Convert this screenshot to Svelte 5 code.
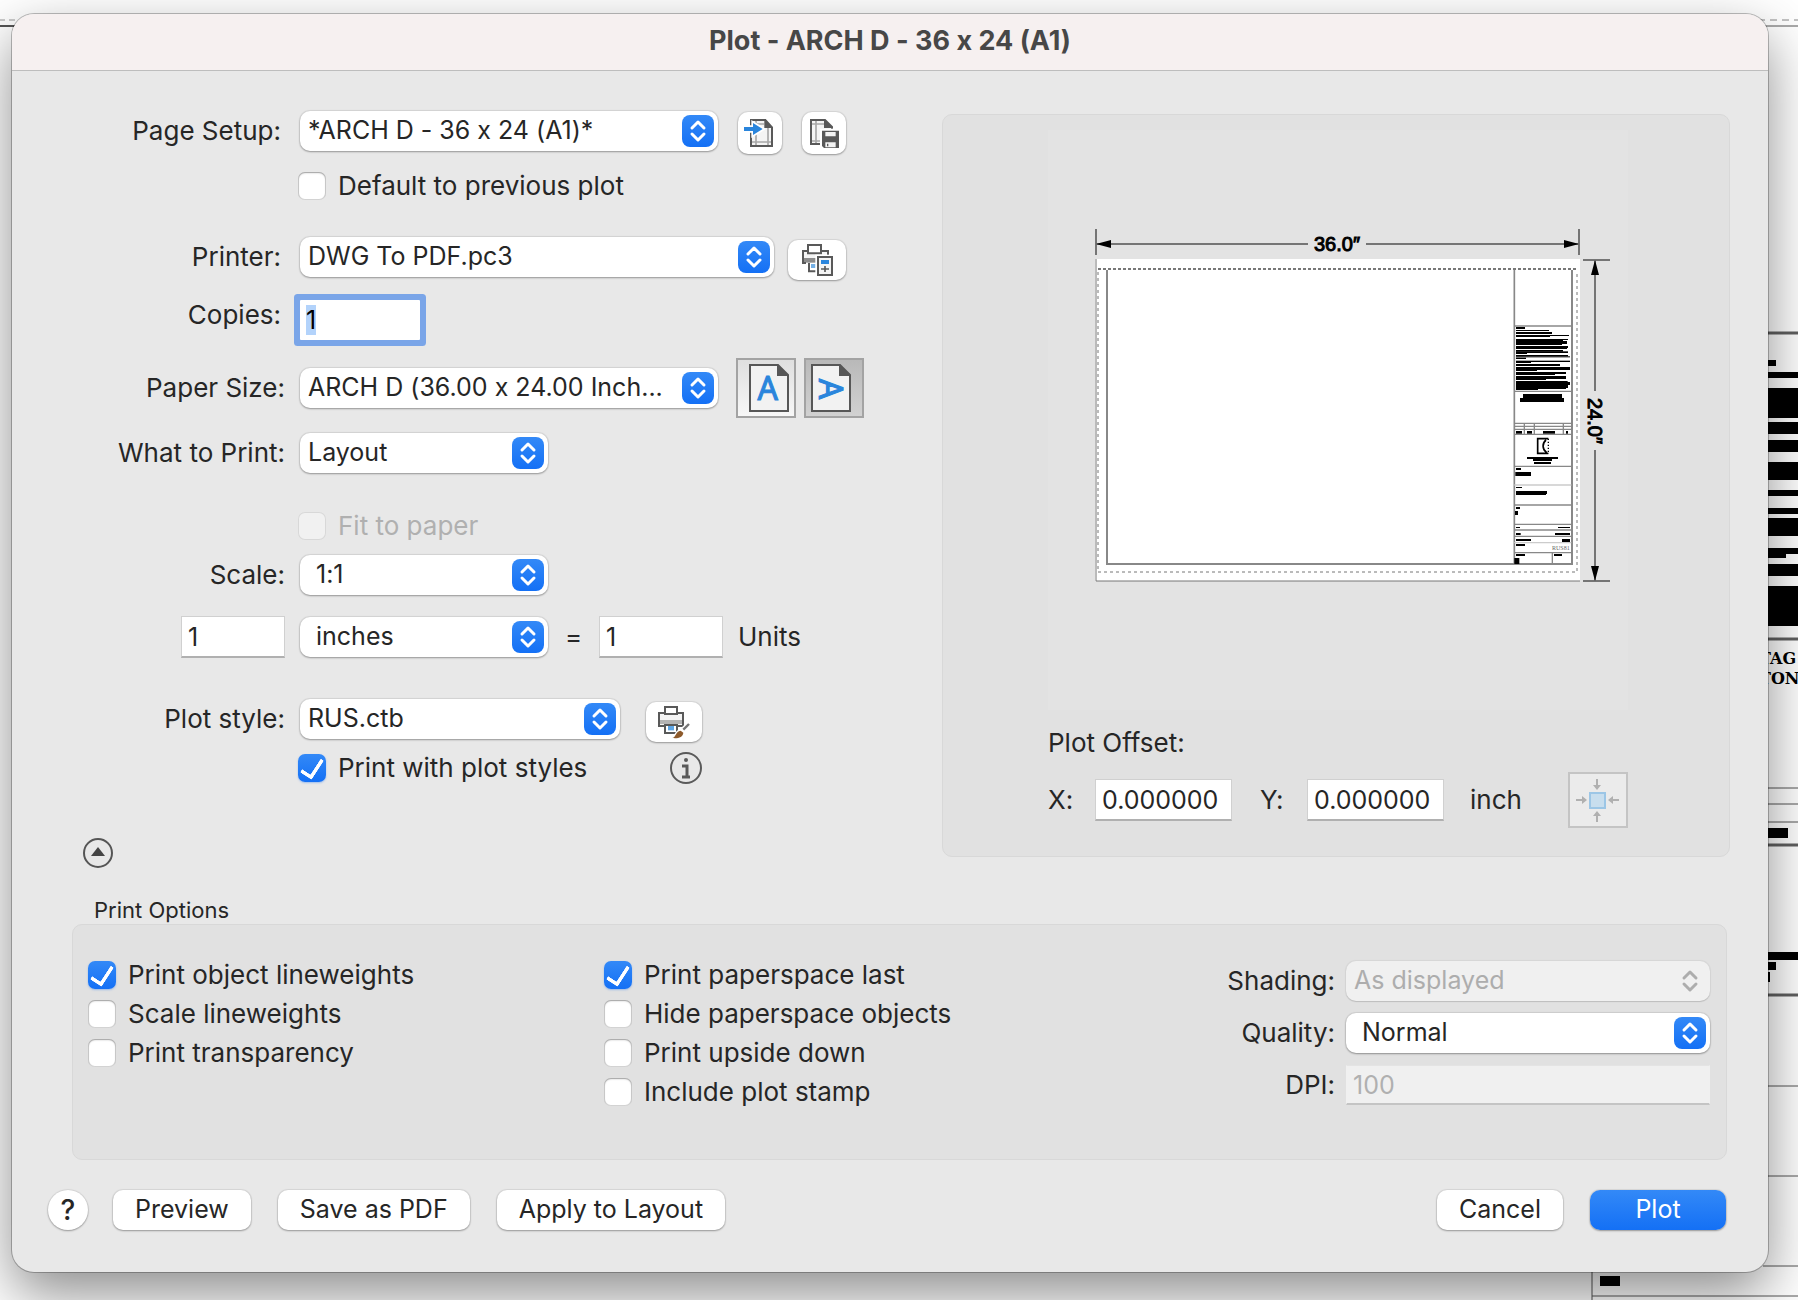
<script lang="ts">
  import { onMount } from 'svelte'

  interface CheckOption {
    id: string
    label: string
    checked: boolean
  }

  let copiesInput: HTMLInputElement
  let copies = $state('1')
  let paperUnits = $state('1')
  let drawingUnits = $state('1')
  let offsetX = $state('0.000000')
  let offsetY = $state('0.000000')
  let defaultToPrevious = $state(false)
  let plotStyles = $state(true)
  let landscape = $state(true)

  let objectOptions: CheckOption[] = $state([
    { id: 'lineweights', label: 'Print object lineweights', checked: true },
    { id: 'scale-lineweights', label: 'Scale lineweights', checked: false },
    { id: 'transparency', label: 'Print transparency', checked: false }
  ])

  let paperOptions: CheckOption[] = $state([
    { id: 'paperspace-last', label: 'Print paperspace last', checked: true },
    { id: 'hide-objects', label: 'Hide paperspace objects', checked: false },
    { id: 'upside-down', label: 'Print upside down', checked: false },
    { id: 'plot-stamp', label: 'Include plot stamp', checked: false }
  ])

  // x, y, width, height of the filled bars in the title block
  const blockBars = [
    [48, 201, 27, 6], [48, 210, 99, 3], [48, 216, 108, 6], [48, 225, 159, 3],
    [48, 228, 102, 3], [48, 237, 156, 3], [48, 240, 141, 3], [48, 243, 153, 9],
    [48, 252, 138, 3], [48, 258, 156, 6], [48, 264, 153, 3], [48, 270, 141, 5],
    [48, 274, 156, 5], [48, 279, 33, 3], [48, 285, 156, 4], [48, 289, 162, 3],
    [48, 293, 30, 4], [48, 302, 162, 4], [48, 305, 45, 4], [48, 312, 132, 6],
    [48, 321, 162, 9], [48, 329, 63, 4], [48, 336, 150, 6], [48, 342, 117, 3],
    [48, 348, 150, 9], [48, 357, 90, 3], [48, 363, 155, 3], [48, 366, 162, 9],
    [48, 375, 156, 9], [48, 383, 150, 4], [48, 387, 66, 3],
    [69, 402, 117, 12], [60, 414, 132, 12],
    [48, 513, 18, 8], [81, 513, 15, 8], [129, 513, 36, 8], [198, 513, 6, 8],
    [81, 591, 93, 6], [99, 597, 57, 6], [102, 606, 51, 6],
    [48, 624, 15, 6], [46, 636, 47, 12], [48, 681, 18, 3], [48, 693, 93, 9],
    [48, 702, 90, 3], [48, 741, 12, 6], [45, 753, 9, 12], [48, 801, 12, 3],
    [174, 801, 36, 3], [48, 819, 14, 6], [165, 819, 45, 6], [48, 837, 45, 6],
    [186, 837, 24, 9], [48, 852, 27, 6], [48, 882, 27, 6], [162, 882, 24, 6],
    [43, 894, 15, 18]
  ]
  const blockLines = [198, 394, 490, 499, 508, 523, 619, 735, 793, 810, 829, 878]

  // the drawing behind the window: y, height, width
  const sheetBars = [
    [360, 6, 8], [372, 6, 30], [388, 30, 30], [422, 12, 30], [440, 12, 30],
    [462, 18, 30], [490, 6, 30], [508, 6, 30], [518, 18, 30], [548, 6, 30],
    [554, 4, 18], [564, 12, 30], [586, 40, 30], [828, 10, 20], [952, 8, 30],
    [962, 8, 8], [972, 10, 2]
  ]
  const thickLines = [333, 639, 845, 995]
  const thinLines = [26, 788, 804, 822, 1086, 1176, 1266]

  onMount(() => {
    copiesInput.focus()
    copiesInput.select()
  })
</script>

{#snippet popup(id: string, value: string, size: string, indent = false, disabled = false)}
  <div class="popup {size}" class:disabled>
    <select {id} class:indent {disabled}>
      <option>{value}</option>
    </select>
    <svg class="chevrons" viewBox="0 0 32 32" aria-hidden="true">
      <path d="M10 13 L16 7 L22 13 M10 19 L16 25 L22 19" />
    </svg>
  </div>
{/snippet}

{#snippet checks(options: CheckOption[])}
  {#each options as option (option.id)}
    <label class="check">
      <input type="checkbox" bind:checked={option.checked} />
      {option.label}
    </label>
  {/each}
{/snippet}

<div class="desktop">
  <svg class="sheet left" viewBox="0 0 20 40" aria-hidden="true">
    <path d="M0 20 H5 M9 20 H15" stroke="#999" />
    <path d="M0 26 H20" stroke="#555" stroke-width="2" />
  </svg>
  <svg class="sheet right" viewBox="0 0 220 1300" aria-hidden="true">
    <path d="M180 20 H220" stroke="#888" stroke-dasharray="7 5" />
    {#each thinLines as y}
      <path d="M185 {y} H220" stroke="#555" />
    {/each}
    {#each thickLines as y}
      <path d="M190 {y} H220" stroke="#606060" stroke-width="3" />
    {/each}
    {#each sheetBars as [y, height, width]}
      <rect x="190" {y} {width} {height} />
    {/each}
    <text x="181" y="664">TAG</text>
    <text x="181" y="684">TON</text>
    <path d="M14 1260 V1300 M14 1296 H220" stroke="#555" fill="none" />
    <rect x="22" y="1276" width="20" height="10" />
  </svg>

  <div class="dialog" role="dialog" aria-labelledby="title">
    <header>
      <h1 id="title">Plot - ARCH D - 36 x 24 (A1)</h1>
    </header>

    <div class="main">
      <div class="form">
        <div class="group">
          <div class="row tall">
            <label class="name" for="page-setup">Page Setup:</label>
            {@render popup('page-setup', '*ARCH D - 36 x 24 (A1)*', 'large')}
            <div class="tools">
              <button class="icon-button square" aria-label="Import page setup">
                <svg viewBox="0 0 132 126">
                  <path d="M39 24 H82 L102 46 V102 H39 Z" fill="#f4f4f4" stroke="#595959" stroke-width="6" />
                  <path d="M54 27 V99 M90 48 V99 M42 90 H99 M42 36 H78" stroke="#a8a8a8" stroke-width="5" />
                  <path d="M79 21 L105 48 H79 Z" fill="#595959" />
                  <path d="M18 45 H45 V33 L74 51 L45 69 V57 H18 Z" fill="#2a85dc" stroke="#fff" stroke-width="10" paint-order="stroke" />
                </svg>
              </button>
              <button class="icon-button square" aria-label="Save page setup">
                <svg viewBox="0 0 132 126">
                  <path d="M27 24 H69 L90 45 V96 H27 Z" fill="#f4f4f4" stroke="#595959" stroke-width="6" />
                  <path d="M42 27 V93 M30 36 H66 M30 87 H66" stroke="#a8a8a8" stroke-width="5" />
                  <path d="M66 21 L93 48 H66 Z" fill="#595959" />
                  <rect x="54" y="50" width="63" height="64" fill="#fff" />
                  <path d="M60 56 H111 V108 H66 L60 102 Z" fill="#595959" />
                  <path d="M70 60 H101 V73 H70 Z M70 91 H101 V106 H70 Z" fill="#f4f4f4" />
                  <path d="M77 95 V103" stroke="#595959" stroke-width="4" />
                </svg>
              </button>
            </div>
          </div>

          <div class="row checkrow">
            <span class="name"></span>
            <label class="check">
              <input type="checkbox" bind:checked={defaultToPrevious} />
              Default to previous plot
            </label>
          </div>

          <div class="row tall printer">
            <label class="name" for="printer">Printer:</label>
            {@render popup('printer', 'DWG To PDF.pc3', 'xlarge')}
            <button class="icon-button" aria-label="Printer info">
              <svg viewBox="0 0 174 120">
                <path d="M42 33 H120 V66 H42 Z" fill="#f4f4f4" />
                <path d="M42 54 H100 V68 H42 Z" fill="#8c8c8c" />
                <path d="M54 69 H45 V33 H120 V54" fill="none" stroke="#595959" stroke-width="6" />
                <path d="M60 15 H99 V40 H60 Z" fill="#fff" stroke="#595959" stroke-width="6" />
                <path d="M84 94 H63 V69" fill="#fff" stroke="#595959" stroke-width="6" />
                <rect x="69" y="72" width="14" height="12" fill="#74b0e6" />
                <rect x="82" y="44" width="58" height="70" fill="#fff" />
                <rect x="90" y="51" width="42" height="54" fill="#f4f4f4" stroke="#595959" stroke-width="6" />
                <rect x="99" y="60" width="24" height="12" fill="#2a85dc" />
                <path d="M99 87 H123 M111 78 V96" stroke="#595959" stroke-width="5" />
              </svg>
            </button>
          </div>

          <div class="row copies">
            <label class="name" for="copies">Copies:</label>
            <input id="copies" class="field focused" type="text" bind:this={copiesInput} bind:value={copies} />
          </div>
        </div>

        <div class="group lower">
          <div class="row paper">
            <label class="name" for="paper-size">Paper Size:</label>
            {@render popup('paper-size', 'ARCH D (36.00 x 24.00 Inch...', 'large')}
            <div class="orientation">
              <button class="orient" class:selected={!landscape} onclick={() => (landscape = false)} aria-label="Portrait">
                <svg viewBox="0 0 180 180">
                  <path d="M42 21 H126 L156 51 V159 H42 Z" fill="#f2f2f2" stroke="#575757" stroke-width="6" />
                  <path d="M123 18 L159 54 H123 Z" fill="#575757" />
                  <text x="95" y="126" text-anchor="middle">A</text>
                </svg>
              </button>
              <button class="orient" class:selected={landscape} onclick={() => (landscape = true)} aria-label="Landscape">
                <svg viewBox="0 0 180 180">
                  <path d="M24 21 H108 L138 51 V159 H24 Z" fill="#f2f2f2" stroke="#575757" stroke-width="6" />
                  <path d="M105 18 L141 54 H105 Z" fill="#575757" />
                  <text transform="translate(45 93) rotate(90)" text-anchor="middle">A</text>
                </svg>
              </button>
            </div>
          </div>

          <div class="row what">
            <label class="name" for="what">What to Print:</label>
            {@render popup('what', 'Layout', 'small')}
          </div>

          <div class="row fit">
            <span class="name"></span>
            <label class="check dimmed">
              <input type="checkbox" disabled />
              Fit to paper
            </label>
          </div>

          <div class="row scale">
            <label class="name" for="scale">Scale:</label>
            {@render popup('scale', '1:1', 'small', true)}
          </div>

          <div class="row units">
            <div class="name">
              <input class="field" type="text" aria-label="Paper units" bind:value={paperUnits} />
            </div>
            {@render popup('unit', 'inches', 'small', true)}
            <span class="equals">=</span>
            <input id="drawing-units" class="field drawing" type="text" bind:value={drawingUnits} />
            <label for="drawing-units">Units</label>
          </div>

          <div class="row tall style">
            <label class="name" for="plot-style">Plot style:</label>
            {@render popup('plot-style', 'RUS.ctb', 'medium')}
            <button class="icon-button edit-style" aria-label="Edit plot style">
              <svg viewBox="0 0 168 120">
                <path d="M39 33 H111 V72 H39 Z" fill="#f4f4f4" stroke="#595959" stroke-width="6" />
                <path d="M42 54 H108 V66 H42 Z" fill="#b4b4b4" />
                <path d="M57 15 H93 V36 H57 Z" fill="#fff" stroke="#595959" stroke-width="6" />
                <path d="M57 69 H93 V93 H57 Z" fill="#fff" stroke="#595959" stroke-width="6" />
                <rect x="66" y="72" width="18" height="13" fill="#5ea6e6" />
                <path d="M130 66 L108 88" stroke="#fff" stroke-width="18" />
                <path d="M129 66 L112 83" stroke="#757575" stroke-width="7" />
                <path d="M79 108 C92 104 88 88 104 86 L112 92 C111 106 96 110 79 108 Z" fill="#8d5a2b" stroke="#fff" stroke-width="8" paint-order="stroke" />
              </svg>
            </button>
          </div>

          <div class="row with-styles">
            <span class="name"></span>
            <label class="check">
              <input type="checkbox" bind:checked={plotStyles} />
              Print with plot styles
            </label>
            <button class="info" aria-label="Plot style information">
              <svg viewBox="0 0 32 32">
                <circle cx="16" cy="16" r="15" fill="none" stroke="#5a5a5a" stroke-width="2" />
                <circle cx="16" cy="8" r="2" fill="#5a5a5a" />
                <path d="M12 14 H17 V25 M12 25 H20" fill="none" stroke="#5a5a5a" stroke-width="3" />
              </svg>
            </button>
          </div>
        </div>

        <button class="disclosure" aria-label="Hide print options">
          <svg viewBox="0 0 30 30">
            <circle cx="15" cy="15" r="14" fill="none" stroke="#555" stroke-width="2" />
            <path d="M15 9 L22 18 H8 Z" fill="#444" />
          </svg>
        </button>
      </div>

      <section class="panel preview">
        <svg class="canvas" viewBox="0 0 580 580" role="img" aria-label="Sheet preview">
          <rect width="580" height="580" fill="#e3e3e3" />
          <g stroke="#757575" stroke-width="2">
            <path d="M48 99 V125 M531 99 V125 M48 114 H260 M318 114 H531" />
            <path d="M535 130 H562 M535 451 H562 M547 130 V261 M547 320 V451" />
          </g>
          <path d="M48 114 L63 110 V118 Z M531 114 L516 110 V118 Z M547 130 L543 145 H551 Z M547 451 L543 436 H551 Z" />
          <text class="size" x="289" y="121" text-anchor="middle">36.0″</text>
          <text class="size" transform="translate(540 291) rotate(90)" text-anchor="middle">24.0″</text>

          <rect x="47" y="129" width="485" height="322" fill="#fff" />
          <path d="M48 129 V451 H532" fill="none" stroke="#777" />
          <path d="M50 139 H529" stroke="#777" stroke-width="2" stroke-dasharray="3 2" />
          <path d="M50 142 V442 H529 V142" fill="none" stroke="#777" stroke-dasharray="3 3" />
          <path d="M59 140 V434 H524 V140" fill="none" stroke="#888" stroke-width="2" />

          <!-- title block -->
          <svg x="452" y="130" width="120" height="320" viewBox="0 0 360 960">
            <path d="M43 30 V912" stroke="#888" stroke-width="5" />
            {#each blockLines as y}
              <path d="M43 {y} H214" stroke="#888" stroke-width="4" />
            {/each}
            <path d="M43 675 H214 M43 848 H214" stroke="#ccc" stroke-width="4" />
            <path d="M73 490 V523 M103 490 V523 M190 490 V523 M157 879 V912" stroke="#888" stroke-width="4" />
            {#each blockBars as [x, y, width, height]}
              <rect {x} {y} {width} {height} />
            {/each}
            <path d="M145 536 H113 V580 H145 M138 540 C126 550 126 568 140 578" fill="none" stroke="#000" stroke-width="5" />
            <path d="M145 536 V582" stroke="#000" stroke-width="4" stroke-dasharray="4 5" />
            <text class="sheet-no" x="156" y="870">RUS81</text>
          </svg>
        </svg>

        <h2>Plot Offset:</h2>
        <div class="offset">
          <label for="offset-x">X:</label>
          <input id="offset-x" class="field" type="text" bind:value={offsetX} />
          <label class="y" for="offset-y">Y:</label>
          <input id="offset-y" class="field" type="text" bind:value={offsetY} />
          <span class="inch">inch</span>
          <button class="center-plot" disabled aria-label="Center the plot">
            <svg viewBox="0 0 60 56">
              <rect x="22" y="21" width="15" height="15" fill="#c8deee" stroke="#9cc6e6" stroke-width="2" />
              <path d="M29 7 V14 M29 50 V43 M8 28 H15 M51 28 H44" stroke="#b0b0b0" stroke-width="2" />
              <path d="M25 13 H33 L29 18 Z M25 44 H33 L29 39 Z M14 24 V32 L19 28 Z M45 24 V32 L40 28 Z" fill="#b0b0b0" />
            </svg>
          </button>
        </div>
      </section>
    </div>

    <h2 class="options-title">Print Options</h2>
    <section class="panel options">
      <div class="column">{@render checks(objectOptions)}</div>
      <div class="column">{@render checks(paperOptions)}</div>
      <div class="quality">
        <label for="shading">Shading:</label>
        {@render popup('shading', 'As displayed', 'fill', false, true)}
        <label for="quality">Quality:</label>
        {@render popup('quality', 'Normal', 'fill', true)}
        <label for="dpi">DPI:</label>
        <input id="dpi" class="field" type="text" value="100" disabled />
      </div>
    </section>

    <footer>
      <button class="push help" aria-label="Help">?</button>
      <button class="push preview-button">Preview</button>
      <button class="push">Save as PDF</button>
      <button class="push">Apply to Layout</button>
      <span class="spacer"></span>
      <button class="push">Cancel</button>
      <button class="push primary">Plot</button>
    </footer>
  </div>
</div>

<style>
  :global(body) {
    margin: 0;
    background: #fff;
  }

  .desktop {
    box-sizing: border-box;
    color: #262626;
    font-family: Inter, "Liberation Sans", sans-serif;
    font-size: 26px;
    /* keeps the x between two numbers a plain letter */
    font-variant-ligatures: no-contextual;
    line-height: 28px;
    min-height: 100vh;
    overflow: hidden;
    padding: 14px 30px 28px 12px;
    position: relative;
  }

  .desktop * {
    box-sizing: border-box;
  }

  .sheet {
    position: absolute;
    top: 0;
  }

  .sheet.left {
    left: 0;
    width: 20px;
  }

  .sheet.right {
    right: 0;
    width: 220px;
  }

  .sheet text {
    font-family: "DejaVu Serif", serif;
    font-size: 16px;
    font-weight: bold;
  }

  .dialog {
    background: #e8e8e8;
    border-radius: 22px;
    box-shadow:
      0 0 0 1px rgba(0, 0, 0, 0.25),
      0 22px 56px rgba(0, 0, 0, 0.45);
    overflow: hidden;
    padding-bottom: 42px;
    position: relative;
  }

  header {
    align-items: center;
    background: #f6f0f0;
    border-bottom: 1px solid #bdbdbd;
    display: flex;
    height: 57px;
    justify-content: center;
    padding-bottom: 2px;
  }

  h1 {
    color: #474747;
    font-size: 27px;
    font-weight: 700;
    line-height: 28px;
    margin: 0;
  }

  h2 {
    font-size: 26px;
    font-weight: 400;
    margin: 0;
  }

  button,
  input,
  select {
    color: inherit;
    font: inherit;
    font-size: 25px;
    font-variant-ligatures: no-contextual;
    margin: 0;
  }

  button {
    padding: 0;
  }

  button svg {
    display: block;
    width: 100%;
  }

  .main {
    display: grid;
    grid-template-columns: 930px 1fr;
    padding: 40px 38px 0 0;
  }

  .row {
    align-items: center;
    display: flex;
    height: 40px;
  }

  .row.tall {
    align-items: flex-start;
    height: 43px;
  }

  .name {
    flex: none;
    line-height: 40px;
    margin-right: 19px;
    text-align: right;
    width: 269px;
  }

  .lower .name {
    margin-right: 15px;
    width: 273px;
  }

  .row.checkrow {
    height: 28px;
    margin: 18px 0 37px;
  }

  .row.copies {
    align-items: flex-start;
    height: 45px;
    margin-top: 15px;
  }

  .copies .field {
    align-self: flex-end;
    width: 120px;
  }

  .row.paper {
    height: 60px;
    margin-top: 18px;
  }

  .row.what {
    margin-top: 15px;
  }

  .row.fit {
    height: 28px;
    margin-top: 39px;
  }

  .row.scale {
    margin-top: 15px;
  }

  .row.units {
    height: 42px;
    margin-top: 21px;
  }

  .units .name {
    display: flex;
    justify-content: flex-end;
  }

  .units .name .field {
    width: 104px;
  }

  .equals {
    text-align: center;
    width: 51px;
  }

  .drawing {
    margin-right: 15px;
    width: 124px;
  }

  .row.style {
    margin-top: 41px;
  }

  .row.with-styles {
    height: 32px;
    margin-top: 10px;
  }

  .with-styles .check {
    width: 370px;
  }

  .popup {
    background: #fff;
    border-radius: 10px;
    box-shadow:
      0 0 1px 1px rgba(0, 0, 0, 0.08),
      0 1px 2px rgba(0, 0, 0, 0.3);
    display: grid;
    flex: none;
    height: 40px;
  }

  .popup select {
    appearance: none;
    background: none;
    border: 0;
    grid-area: 1 / 1;
    opacity: 1;
    outline: 0;
    padding: 0 44px 3px 8px;
    width: 100%;
  }

  .popup select.indent {
    padding-left: 16px;
  }

  .chevrons {
    align-self: center;
    background: linear-gradient(#3389f7, #1470f5);
    border-radius: 8px;
    grid-area: 1 / 1;
    height: 32px;
    justify-self: end;
    margin-right: 4px;
    pointer-events: none;
    width: 32px;
  }

  .chevrons path {
    fill: none;
    stroke: #fff;
    stroke-linecap: round;
    stroke-linejoin: round;
    stroke-width: 3;
  }

  .popup.disabled {
    background: #f0f0f0;
    box-shadow:
      0 0 1px 1px rgba(0, 0, 0, 0.05),
      0 1px 1px rgba(0, 0, 0, 0.12);
    color: #adadad;
  }

  .disabled .chevrons {
    background: none;
  }

  .disabled .chevrons path {
    stroke: #adadad;
  }

  .small {
    width: 248px;
  }

  .medium {
    width: 320px;
  }

  .large {
    width: 418px;
  }

  .xlarge {
    width: 474px;
  }

  .field {
    background: #fff;
    border: 1px solid #d0d0d0;
    border-bottom: 2px solid #b0b0b0;
    border-radius: 0;
    height: 42px;
    outline: 0;
    padding: 0 6px;
  }

  .field.focused {
    border: 0;
    box-shadow: 0 0 0 6px #7aa5e8;
    border-radius: 1px;
    height: 40px;
  }

  .field::selection {
    background: #b3d3fb;
    color: #000;
  }

  .check {
    align-items: center;
    display: flex;
    gap: 12px;
  }

  .check input {
    appearance: none;
    background: #fff;
    border-radius: 7px;
    box-shadow:
      inset 0 0 0 1px rgba(0, 0, 0, 0.16),
      inset 0 1px 2px rgba(0, 0, 0, 0.25);
    display: grid;
    height: 28px;
    margin-left: -2px;
    place-items: center;
    width: 28px;
  }

  .check input:checked {
    background: linear-gradient(#3389f7, #1470f5);
    box-shadow: 0 1px 2px rgba(20, 112, 245, 0.35);
  }

  .check input:checked::before {
    border: solid #fff;
    border-width: 0 4px 4px 0;
    border-radius: 2px;
    content: "";
    height: 19px;
    margin-bottom: 4px;
    transform: rotate(33deg);
    width: 10px;
  }

  .dimmed {
    color: #b0b0b0;
  }

  .check input:disabled {
    background: #f1f1f1;
    box-shadow: inset 0 0 0 1px rgba(0, 0, 0, 0.1);
  }

  .tools {
    align-self: flex-end;
    display: flex;
    gap: 20px;
    margin-left: 20px;
  }

  .icon-button {
    align-self: flex-end;
    background: #fff;
    border: 0;
    border-radius: 10px;
    box-shadow:
      0 0 1px 1px rgba(0, 0, 0, 0.07),
      0 1px 2px rgba(0, 0, 0, 0.3);
    height: 40px;
    margin-left: 14px;
    width: 58px;
  }

  .icon-button.square {
    height: 42px;
    margin: 0;
    width: 44px;
  }

  .icon-button.edit-style {
    margin-left: 26px;
    width: 56px;
  }

  .orientation {
    display: flex;
    gap: 8px;
    margin-left: 18px;
  }

  .orient {
    background: linear-gradient(#dedede, #f8f8f8);
    border: 0;
    box-shadow: inset 0 0 0 2px #a3a3a3;
    height: 60px;
    width: 60px;
  }

  .orient.selected {
    background: linear-gradient(#b8b8b8, #d2d2d2);
  }

  .orient text {
    fill: #2a85dc;
    font-family: "Noto Sans", sans-serif;
    font-size: 96px;
    stroke: #2a85dc;
    stroke-width: 3;
  }

  .info,
  .disclosure {
    background: none;
    border: 0;
    width: 32px;
  }

  .disclosure {
    display: block;
    margin: 54px 0 0 71px;
    width: 30px;
  }

  .panel {
    background: #e1e1e1;
    border: 1px solid #d8d8d8;
    border-radius: 10px;
  }

  .preview {
    align-self: start;
    margin-top: 3px;
    padding: 15px 101px 28px 105px;
  }

  .canvas {
    display: block;
    width: 100%;
  }

  .size {
    font-family: "Liberation Sans", sans-serif;
    font-size: 20px;
    stroke: #000;
    stroke-width: 1;
  }

  .sheet-no {
    fill: #666;
    font-family: "Liberation Serif", serif;
    font-size: 18px;
  }

  .preview h2 {
    margin-top: 19px;
  }

  .offset {
    align-items: center;
    display: flex;
    margin-top: 15px;
  }

  .offset label {
    width: 47px;
  }

  .offset .y {
    margin-left: 28px;
  }

  .offset .field {
    width: 137px;
  }

  .inch {
    flex: 1;
    margin-left: 26px;
  }

  .center-plot {
    background: #ebebeb;
    border: 0;
    box-shadow: inset 0 0 0 2px #c4c4c4;
    height: 56px;
    width: 60px;
  }

  .options-title {
    font-size: 22px;
    margin: 28px 0 0 82px;
  }

  .options {
    display: grid;
    grid-template-columns: 516px 516px 1fr;
    height: 236px;
    margin: 0 41px 0 60px;
    padding: 36px 16px 0 15px;
  }

  .column {
    display: flex;
    flex-direction: column;
    gap: 11px;
  }

  .column .check input {
    margin-left: 0;
  }

  .quality {
    align-content: start;
    align-items: center;
    column-gap: 11px;
    display: grid;
    grid-template-columns: 1fr 364px;
    row-gap: 12px;
    text-align: right;
  }

  .quality .field {
    height: 40px;
  }

  .field:disabled {
    background: #f0f0f0;
    border-color: #e4e4e4 #f0f0f0 #c4c4c4;
    color: #b0b0b0;
  }

  footer {
    display: flex;
    gap: 27px;
    padding: 30px 42px 0 36px;
  }

  .spacer {
    flex: 1;
  }

  .push {
    background: #fff;
    border: 0;
    border-radius: 10px;
    box-shadow:
      0 0 1px 1px rgba(0, 0, 0, 0.07),
      0 1px 2px rgba(0, 0, 0, 0.3);
    height: 40px;
    padding: 0 22px 2px;
  }

  .push.help {
    border-radius: 50%;
    font-size: 28px;
    font-weight: 500;
    padding: 0;
    width: 40px;
  }

  .preview-button {
    margin-left: -2px;
  }

  .push.primary {
    background: linear-gradient(#3389f7, #1470f5);
    color: #fff;
    width: 136px;
  }
</style>
